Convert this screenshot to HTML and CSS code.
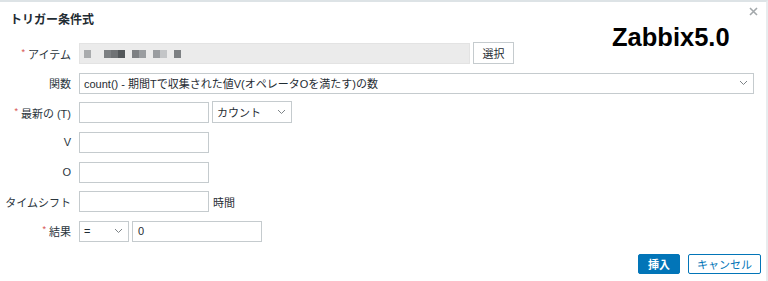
FILE: index.html
```html
<!DOCTYPE html>
<html lang="ja">
<head>
<meta charset="utf-8">
<title>トリガー条件式</title>
<link rel="stylesheet" href="styles.css">
</head>
<body>
<div class="dialog">
  <div class="header">
    <h1 class="title">トリガー条件式</h1>
    <span class="close">
      <svg width="9" height="9" viewBox="0 0 9 9"><path d="M1 1L8 8M8 1L1 8" stroke="#a3a8ab" stroke-width="1.6"/></svg>
    </span>
  </div>
  <div class="brand">Zabbix5.0</div>
  <div class="form">
    <label class="lbl"><span class="req">*</span>アイテム</label>
    <div class="field">
      <div class="input item-input">
        <span class="blk b1"></span>
        <span class="sp s1"></span>
        <span class="blk b2"></span><span class="blk b3"></span><span class="blk b4"></span>
        <span class="sp s2"></span>
        <span class="blk b2"></span><span class="blk b5"></span>
        <span class="sp s2"></span>
        <span class="blk b5"></span><span class="blk b6"></span>
        <span class="sp s2"></span>
        <span class="blk b2"></span>
      </div>
      <button class="btn-sel">選択</button>
    </div>

    <label class="lbl">関数</label>
    <div class="field">
      <div class="select func">
        <span>count() - 期間Tで収集された値V(オペレータOを満たす)の数</span>
        <svg class="chev" width="9" height="6" viewBox="0 0 9 6"><path d="M1 1L4.5 4.5L8 1" fill="none" stroke="#7d8387" stroke-width="1"/></svg>
      </div>
    </div>

    <label class="lbl"><span class="req">*</span>最新の (T)</label>
    <div class="field">
      <div class="input w130"></div>
      <div class="select count">
        <span>カウント</span>
        <svg class="chev" width="9" height="6" viewBox="0 0 9 6"><path d="M1 1L4.5 4.5L8 1" fill="none" stroke="#7d8387" stroke-width="1"/></svg>
      </div>
    </div>

    <label class="lbl">V</label>
    <div class="field"><div class="input w130"></div></div>

    <label class="lbl">O</label>
    <div class="field"><div class="input w130"></div></div>

    <label class="lbl">タイムシフト</label>
    <div class="field"><div class="input w130"></div><span class="unit">時間</span></div>

    <label class="lbl"><span class="req">*</span>結果</label>
    <div class="field">
      <div class="select op">
        <span>=</span>
        <svg class="chev" width="9" height="6" viewBox="0 0 9 6"><path d="M1 1L4.5 4.5L8 1" fill="none" stroke="#7d8387" stroke-width="1"/></svg>
      </div>
      <div class="input w130 val">0</div>
    </div>
  </div>
  <div class="footer">
    <button class="btn-primary">挿入</button>
    <button class="btn-alt">キャンセル</button>
  </div>
</div>
</body>
</html>
```

FILE: styles.css
```css
html, body {
  margin: 0;
  padding: 0;
  background: #ffffff;
}
body {
  width: 768px;
  height: 281px;
  overflow: hidden;
  font-family: "Liberation Sans", "Noto Sans CJK JP", sans-serif;
  font-size: 11px;
  color: #1f2c33;
}
.dialog {
  position: relative;
  box-sizing: border-box;
  height: 281px;
  border-top: 2px solid #dde3e6;
  border-right: 2px solid #e8ecee;
}
.header {
  height: 41px;
  display: flex;
  justify-content: space-between;
  align-items: flex-start;
  padding: 0 8px 0 10px;
}
.title {
  margin: 10px 0 0;
  font-size: 12px;
  line-height: 16px;
  font-weight: bold;
  color: #1f2c33;
}
.close {
  margin-top: 5px;
  display: block;
  line-height: 0;
}
.brand {
  position: absolute;
  left: 612px;
  top: 20px;
  font-family: "Liberation Sans", sans-serif;
  font-weight: bold;
  font-size: 25.5px;
  line-height: 30px;
  color: #000;
}
.form {
  display: grid;
  grid-template-columns: 71px 1fr;
  column-gap: 8px;
  row-gap: 8.67px;
  grid-auto-rows: 21px;
}
.lbl {
  display: flex;
  align-items: center;
  justify-content: flex-end;
  white-space: nowrap;
  color: #2b363d;
}
.req {
  color: #d64e4e;
  font-size: 9px;
  margin-right: 3px;
  position: relative;
  top: -2px;
}
.field {
  display: flex;
  align-items: stretch;
  gap: 3px;
}
.input, .select {
  box-sizing: border-box;
  border: 1px solid #c5cbce;
  background: #fff;
  height: 21px;
}
.w130 { width: 130px; }
.item-input {
  width: 391px;
  background: #ebebeb;
  border-color: #e3e3e3;
  display: flex;
  align-items: center;
  padding-left: 4px;
}
.blk {
  display: block;
  width: 7px;
  height: 8px;
}
.sp { display: block; }
.s1 { width: 13px; }
.s2 { width: 7px; }
.b1 { background: #a9abad; }
.b2 { background: #7d8083; }
.b3 { background: #6f7275; }
.b4 { background: #53575a; }
.b5 { background: #9a9da0; }
.b6 { background: #c3c5c7; }
.btn-sel {
  margin: 0;
  box-sizing: border-box;
  height: 22px;
  width: 41px;
  margin-top: -1px;
  border: 1px solid #c5cbce;
  background: #fff;
  font-family: inherit;
  font-size: 11px;
  color: #1f2c33;
  padding: 0;
}
.select {
  display: flex;
  align-items: center;
  justify-content: space-between;
  padding: 0 5px 0 4px;
  white-space: nowrap;
}
.func { width: 675px; }
.count { width: 80px; margin-top: -1px; height: 22px; }
.op { width: 50px; }
.chev { flex: none; }
.val {
  display: flex;
  align-items: center;
  padding-left: 5px;
}
.unit {
  display: flex;
  align-items: center;
  margin-left: 1px;
  color: #1f2c33;
}
.footer {
  display: flex;
  justify-content: flex-end;
  gap: 8px;
  margin-top: 12px;
  padding-right: 5px;
}
.btn-primary, .btn-alt {
  margin: 0;
  box-sizing: border-box;
  height: 20px;
  padding: 0;
  font-family: inherit;
  font-size: 11px;
  border-radius: 2px;
}
.btn-primary {
  width: 42px;
  background: #0275b8;
  border: 1px solid #0275b8;
  color: #fff;
  font-weight: bold;
}
.btn-alt {
  width: 73px;
  background: #fff;
  border: 1px solid #0275b8;
  color: #0275b8;
}
```
